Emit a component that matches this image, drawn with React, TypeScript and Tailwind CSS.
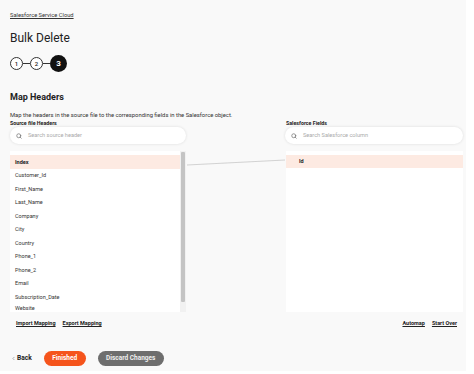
import { Search, ChevronLeft } from 'lucide-react'

const SOURCE_HEADERS = [
  'Index',
  'Customer_Id',
  'First_Name',
  'Last_Name',
  'Company',
  'City',
  'Country',
  'Phone_1',
  'Phone_2',
  'Email',
  'Subscription_Date',
  'Website',
]

function Step({ n, active }: { n: number; active?: boolean }) {
  if (active) {
    return (
      <div className="flex h-[17px] w-[17px] items-center justify-center rounded-full bg-[#111] text-[8px] font-bold text-white">
        {n}
      </div>
    )
  }
  return (
    <div className="flex h-[13px] w-[13px] items-center justify-center rounded-full border border-[#333] bg-white text-[6px] font-medium text-[#222]">
      {n}
    </div>
  )
}

function SearchBox({ placeholder }: { placeholder: string }) {
  return (
    <div className="flex h-[17px] items-center gap-[6px] rounded-full bg-white px-[6px] shadow-[0_0_3px_rgba(0,0,0,0.12)]">
      <Search className="h-[6px] w-[6px] text-[#777]" strokeWidth={3} />
      <span className="text-[5.6px] text-[#aaa]">{placeholder}</span>
    </div>
  )
}

export default function App() {
  return (
    <div className="h-[374px] w-[474px] bg-white font-['Roboto',sans-serif] text-[#222]">
      <div className="flex h-[371px] w-[466px] flex-col bg-[#f9f9f9] pl-[10px] pt-[10px]">
        {/* Breadcrumb + title */}
        <a className="h-[10px] text-[5.75px] leading-[10px] text-[#333] underline">Salesforce Service Cloud</a>
        <h1 className="mt-[10px] h-[16px] text-[12px] leading-[16px]">Bulk Delete</h1>

        {/* Stepper */}
        <div className="mt-[9px] flex h-[17px] items-center">
          <Step n={1} />
          <div className="h-px w-[7px] bg-[#333]" />
          <Step n={2} />
          <div className="h-px w-[7px] bg-[#333]" />
          <Step n={3} active />
        </div>

        <h2 className="mt-[19px] h-[12px] text-[9px] font-bold leading-[12px]">Map Headers</h2>
        <p className="mt-[8px] h-[8px] text-[5.85px] leading-[8px] text-[#333]">
          Map the headers in the source file to the corresponding fields in the Salesforce object.
        </p>

        {/* Mapping columns */}
        <div className="grid grid-cols-[176px_99px_178px]">
          <div className="flex flex-col">
            <div className="h-[8px] text-[5.3px] font-bold leading-[8px]">Source file Headers</div>
            <SearchBox placeholder="Search source header" />
            <div className="mt-[7px] flex h-[161px]">
              <div className="flex w-[170px] flex-col bg-white pt-[4px]">
                {SOURCE_HEADERS.map((h, i) => (
                  <div
                    key={h}
                    className={
                      i === 0
                        ? 'flex h-[13.5px] shrink-0 items-center bg-[#fdeae2] pl-[5px] text-[5.5px] font-bold'
                        : i === SOURCE_HEADERS.length - 1
                          ? 'flex h-[8.5px] shrink-0 items-end pl-[5px] text-[5.5px] leading-[7px] text-[#333]'
                          : 'flex h-[13.5px] shrink-0 items-center pl-[5px] text-[5.5px] text-[#333]'
                    }
                  >
                    {h}
                  </div>
                ))}
              </div>
              <div className="w-[6px] bg-[#f1f1f1] px-px pt-px">
                <div className="h-[150px] rounded-[1px] bg-[#c4c4c4]" />
              </div>
            </div>
            <div className="mt-[7px] flex h-[8px] gap-[7px] pl-[6px] text-[5.5px] font-bold leading-[8px] underline">
              <span>Import Mapping</span>
              <span>Export Mapping</span>
            </div>
          </div>

          {/* Connector */}
          <div className="pt-[32px]">
            <svg width="99" height="20" viewBox="0 0 99 20">
              <line x1="1" y1="14" x2="99" y2="9" stroke="#c8c8c8" strokeWidth="0.8" />
            </svg>
          </div>

          <div className="flex flex-col">
            <div className="h-[8px] pl-px text-[5.3px] font-bold leading-[8px]">Salesforce Fields</div>
            <SearchBox placeholder="Search Salesforce column" />
            <div className="mt-[7px] ml-px h-[161px] bg-white pt-[4px]">
              <div className="flex h-[13px] items-center bg-[#fdeae2] pl-[13px] text-[5.5px] font-bold">Id</div>
            </div>
            <div className="mt-[7px] flex h-[8px] justify-end gap-[7px] pr-[6px] text-[5.5px] font-bold leading-[8px] underline">
              <span>Automap</span>
              <span>Start Over</span>
            </div>
          </div>
        </div>

        {/* Footer */}
        <div className="mt-[24px] flex h-[15px] items-center">
          <div className="ml-[1px] flex items-center gap-[1px] text-[6.6px] font-bold">
            <ChevronLeft className="h-[5px] w-[5px] text-[#888]" strokeWidth={3} />
            <span>Back</span>
          </div>
          <button className="ml-[12px] flex h-[15px] w-[42px] items-center justify-center rounded-full bg-[#f5541c] text-[6.5px] font-bold text-white">
            Finished
          </button>
          <button className="ml-[12px] flex h-[15px] w-[66px] items-center justify-center rounded-full bg-[#6e6e6e] text-[6.5px] font-bold text-[#eee]">
            Discard Changes
          </button>
        </div>
      </div>
    </div>
  )
}
